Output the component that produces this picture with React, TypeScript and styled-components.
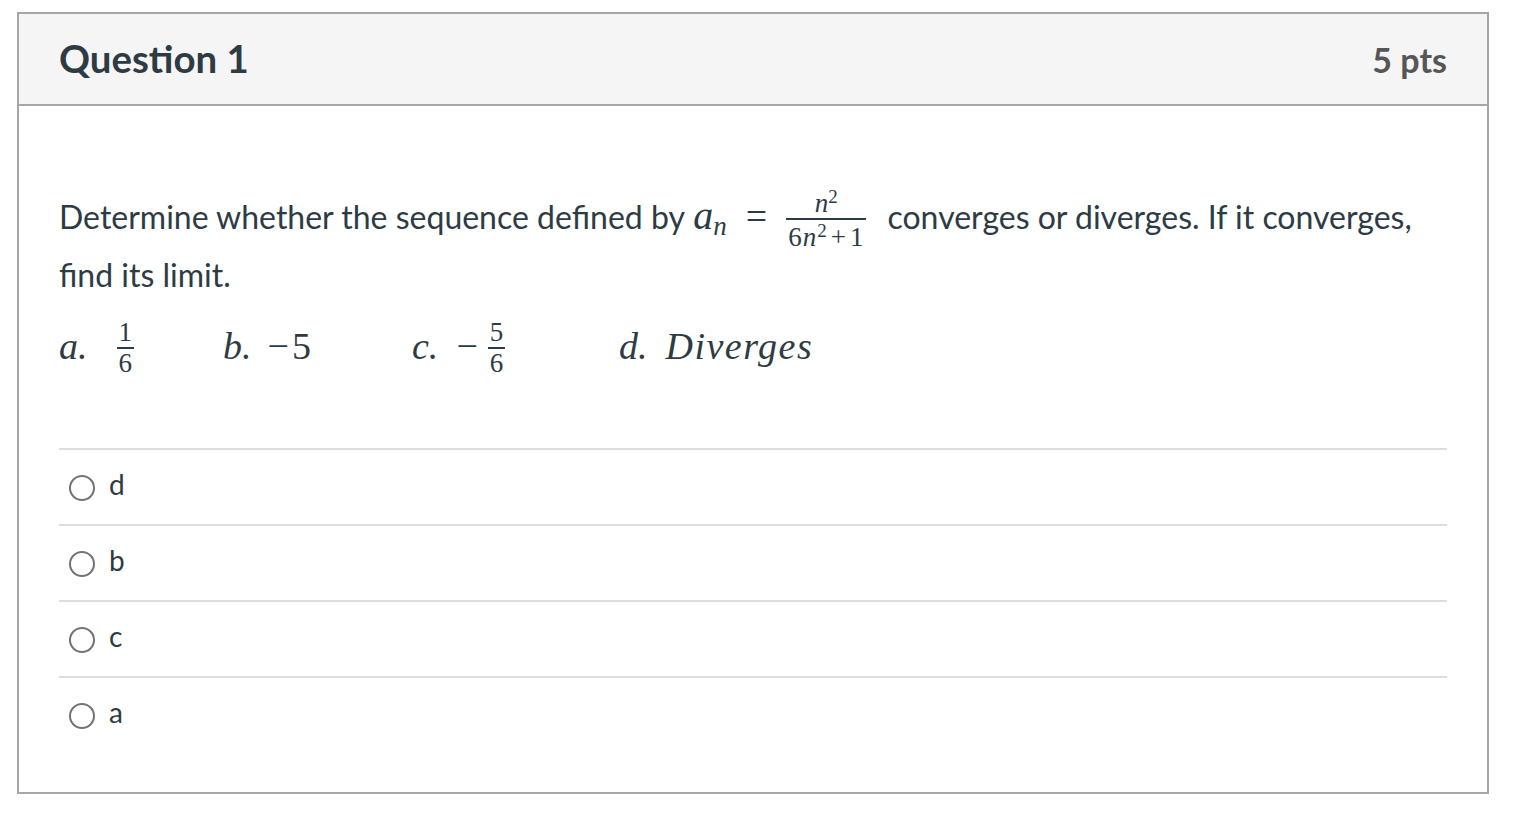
import styled, { createGlobalStyle } from "styled-components";

const GlobalStyle = createGlobalStyle`
  html, body {
    margin: 0;
    padding: 0;
    background: #ffffff;
    font-family: Lato, "Open Sans", sans-serif;
    color: #2d3b45;
  }
`;

const answers = ["d", "b", "c", "a"];

const Fraction = ({ top, bottom }: { top: React.ReactNode; bottom: React.ReactNode }) => (
  <Frac>
    <FracTop>{top}</FracTop>
    <FracBottom>{bottom}</FracBottom>
  </Frac>
);

const App = () => {
  return (
    <Page>
      <GlobalStyle />
      <Card>
        <Header>
          <Title>Question 1</Title>
          <Points>5 pts</Points>
        </Header>
        <Body>
          <QuestionText>
            Determine whether the sequence defined by{" "}
            <MathVar>
              a<Sub>n</Sub>
            </MathVar>
            <Equals>=</Equals>
            <Fraction
              top={
                <>
                  <i>n</i>
                  <Sup>2</Sup>
                </>
              }
              bottom={
                <Wide>
                  6<i>n</i>
                  <Sup>2</Sup>
                  <Plus>+</Plus>1
                </Wide>
              }
            />
            <AfterMath>converges or diverges. If it converges,</AfterMath> find its limit.
          </QuestionText>
          <Choices>
            <Choice $width={164} $gap={29}>
              <i>a.</i>
              <ChoiceFraction>
                <Fraction top="1" bottom="6" />
              </ChoiceFraction>
            </Choice>
            <Choice $width={189} $gap={16}>
              <i>b.</i>
              <Minus>−5</Minus>
            </Choice>
            <Choice $width={207} $gap={18}>
              <i>c.</i>
              <Minus>−</Minus>
              <ChoiceFraction $pull={11}>
                <Fraction top="5" bottom="6" />
              </ChoiceFraction>
            </Choice>
            <Choice $gap={18}>
              <i>d.</i>
              <Word>Diverges</Word>
            </Choice>
          </Choices>
          <AnswerList>
            {answers.map((answer) => (
              <AnswerRow key={answer}>
                <Radio />
                <AnswerLabel>{answer}</AnswerLabel>
              </AnswerRow>
            ))}
          </AnswerList>
        </Body>
      </Card>
    </Page>
  );
};

export default App;

const Page = styled.div`
  padding: 12px 34px 0 17px;
`;

const Card = styled.div`
  border: 2px solid #a6a6a6;
  box-sizing: border-box;
  height: 782px;
`;

const Header = styled.div`
  display: flex;
  justify-content: space-between;
  align-items: center;
  height: 90px;
  padding: 0 40px;
  background: #f5f5f5;
  border-bottom: 2px solid #a6a6a6;
`;

const Title = styled.h2`
  margin: 0 0 2px;
  font-size: 38.4px;
  font-weight: 700;
  color: #2d3b45;
`;

const Points = styled.div`
  font-size: 34px;
  font-weight: 700;
  color: #565656;
`;

const Body = styled.div`
  padding: 82px 40px 0;
`;

const QuestionText = styled.p`
  margin: 0;
  font-size: 32px;
  line-height: 58px;
`;

const MathVar = styled.span`
  font-family: "Liberation Serif", serif;
  font-style: italic;
  font-size: 40px;
  line-height: 0;
  margin-left: 1px;
`;

const Sub = styled.sub`
  font-size: 27px;
  line-height: 0;
  vertical-align: -6px;
`;

const Sup = styled.sup`
  font-size: 19px;
  line-height: 0;
  vertical-align: 9px;
`;

const Equals = styled.span`
  font-family: "Liberation Serif", serif;
  font-size: 38px;
  line-height: 0;
  margin: 0 19px;
`;

const Frac = styled.span`
  display: inline-flex;
  flex-direction: column;
  align-items: center;
  vertical-align: middle;
  font-family: "Liberation Serif", serif;
  font-size: 27px;
  line-height: 29px;
  margin: -6px 0 -3px;
`;

const FracTop = styled.span`
  display: block;
  padding: 0 2px;
  border-bottom: 2px solid #2d3b45;
  align-self: stretch;
  text-align: center;
`;

const FracBottom = styled.span`
  display: block;
  padding: 0 2px;
`;

const Wide = styled.span`
  display: block;
  margin: 3px 0 -3px;
  letter-spacing: 1px;
`;

const Plus = styled.span`
  margin: 0 3px;
`;

const AfterMath = styled.span`
  margin-left: 21px;
`;

const Choices = styled.div`
  display: flex;
  align-items: center;
  height: 58px;
  margin-top: 13px;
  font-family: "Liberation Serif", serif;
  font-size: 38px;
`;

const Choice = styled.div<{ $width?: number; $gap: number }>`
  display: flex;
  align-items: center;
  gap: ${(p) => p.$gap}px;
  width: ${(p) => (p.$width ? `${p.$width}px` : "auto")};
`;

const Minus = styled.span`
  letter-spacing: 3px;
`;

const ChoiceFraction = styled.span<{ $pull?: number }>`
  display: inline-flex;
  padding-top: 7px;
  margin-left: -${(p) => p.$pull ?? 0}px;
`;

const Word = styled.span`
  font-style: italic;
  letter-spacing: 1.5px;
`;

const AnswerList = styled.div`
  margin-top: 73px;
`;

const AnswerRow = styled.div`
  display: flex;
  align-items: center;
  box-sizing: border-box;
  height: 76px;
  padding: 0 0 0 10px;
  gap: 14px;
  border-top: 2px solid #dddddd;
`;

const Radio = styled.span`
  box-sizing: border-box;
  width: 26px;
  height: 26px;
  margin-top: 1px;
  border: 2px solid #737373;
  border-radius: 50%;
  background: #ffffff;
`;

const AnswerLabel = styled.span`
  font-size: 28px;
  margin-top: -6px;
  color: #2d3b45;
`;
